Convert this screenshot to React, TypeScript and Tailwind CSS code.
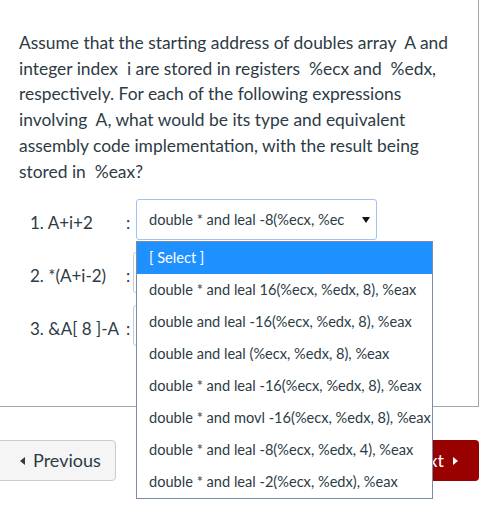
import React from 'react';

const lines = [
  'Assume that the starting address of doubles array\u00a0 A and',
  'integer index \u00a0i are stored in registers \u00a0%ecx and \u00a0%edx,',
  'respectively. For each of the following expressions',
  'involving \u00a0A, what would be its type and equivalent',
  'assembly code implementation, with the result being',
  'stored in \u00a0%eax?',
];

const options = [
  '[ Select ]',
  'double * and leal 16(%ecx, %edx, 8), %eax',
  'double and leal -16(%ecx, %edx, 8), %eax',
  'double and leal (%ecx, %edx, 8), %eax',
  'double * and leal -16(%ecx, %edx, 8), %eax',
  'double * and movl -16(%ecx, %edx, 8), %eax',
  'double * and leal -8(%ecx, %edx, 4), %eax',
  'double * and leal -2(%ecx, %edx), %eax',
];

const questions = [
  { label: '1. A+i+2', value: 'double * and leal -8(%ecx, %ec', focused: true, shift: '' },
  { label: '2. *(A+i-2)', value: '', focused: false, shift: 'ml-[-3px]' },
  { label: '3. &A[ 8 ]-A', value: '', focused: false, shift: 'ml-[-3px]' },
];

export default function App() {
  return (
    <div className="relative w-[492px] h-[519px] overflow-hidden bg-white text-[#2d3b45] font-['Lato','Open_Sans',sans-serif]">
      {/* Question box */}
      <div className="w-[479px] h-[407px] border-r border-b border-[#a5a5a5] pt-[30px] pl-[19px]">
        <div className="text-[17.4px] leading-[25.7px]">
          {lines.map((l, i) => (
            <div key={i} className="whitespace-pre">{l}</div>
          ))}
        </div>

        <div className="mt-[15px] flex flex-col gap-[12px]">
          {questions.map((q, i) => (
            <div key={i} className="flex items-center h-[41px] pl-[11px]">
              <span className="text-[17px] w-[96px] whitespace-pre pt-[6px]">
                {q.label}
              </span>
              <span className="w-[10px] text-[17px] pt-[6px]">:</span>
              <div
                className={
                  'w-[241px] h-[41px] rounded-[3px] border bg-white flex items-center pl-[12px] pr-[6px] ' +
                  q.shift + ' ' +
                  (q.focused ? 'border-[#9fc4ee]' : 'border-[#c7cdd1]')
                }
              >
                <span className="flex-1 text-[14.6px] text-[#2d3b45] whitespace-nowrap overflow-hidden">{q.value}</span>
                <svg width="8" height="6" viewBox="0 0 8 6" className="ml-[6px]">
                  <path d="M0 0h8L4 6z" fill="#111" />
                </svg>
              </div>
            </div>
          ))}
        </div>
      </div>

      {/* Buttons */}
      <div className="flex justify-between mt-[33px] w-[479px]">
        <button className="ml-[-6px] w-[122px] h-[41px] rounded-[4px] border border-[#c7cdd1] bg-[#f5f5f5] text-[#2d3b45] text-[18px] flex items-center pl-[25px]">
          <svg width="5" height="8" viewBox="0 0 5 8" className="mr-[8px]">
            <path d="M5 0v8L0 4z" fill="#2d3b45" />
          </svg>
          Previous
        </button>
        <button className="w-[80px] h-[41px] rounded-[4px] bg-[#990000] text-white text-[18px] flex items-center justify-end pr-[21px]">
          Next
          <svg width="5" height="8" viewBox="0 0 5 8" className="ml-[9px]">
            <path d="M0 0v8L5 4z" fill="#fff" />
          </svg>
        </button>
      </div>

      {/* Open dropdown list */}
      <div className="absolute left-[136px] top-[241px] w-[297px] border border-[#7c8ba6] bg-white text-[14.6px]">
        {options.map((o, i) => (
          <div
            key={i}
            className={
              'h-[32px] flex items-center pl-[12px] whitespace-nowrap ' +
              (i === 0 ? 'bg-[#1e90ff] text-white' : 'text-[#2d3b45]')
            }
          >
            {o}
          </div>
        ))}
      </div>
    </div>
  );
}
